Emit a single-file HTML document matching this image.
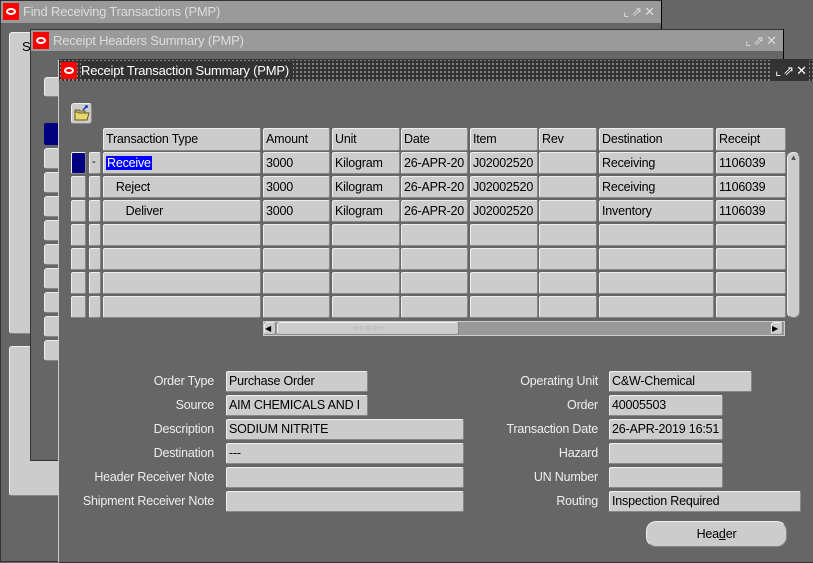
<!DOCTYPE html>
<html><head><style>
*{box-sizing:border-box;margin:0;padding:0}
body{width:813px;height:562px;background:#666;position:relative;overflow:hidden;font-family:"Liberation Sans",sans-serif;font-size:12.5px;letter-spacing:-0.2px}
.a{position:absolute}
.win{position:absolute;background:#666;border:1px solid #333}
.tb{position:absolute;left:0;right:0;top:0;height:21px;color:#e0e0e0;font-size:13px;line-height:21px;padding-left:22px;white-space:nowrap}
.logo{position:absolute;left:2px;top:2px;width:16px;height:17px;background:#f00}
.logo:after{content:"";position:absolute;left:3px;top:5px;width:10px;height:7px;border:2px solid #fff;border-radius:50%/50%;box-sizing:border-box}
.ctl{position:absolute;right:4px;top:0;font-size:13px;letter-spacing:2px;color:#ddd}
.f{position:absolute;background:#ccc;border:1px solid #eee;border-right-color:#888;border-bottom-color:#888;border-radius:2px;height:21px;line-height:19px;padding-left:2px;white-space:nowrap;overflow:hidden;color:#000}
.lb{position:absolute;color:#eee;text-align:right;white-space:nowrap;line-height:21px}
.p{position:absolute;background:#ccc;border:1px solid #eee;border-right-color:#888;border-bottom-color:#888;border-radius:3px}
</style></head><body>
<div class="win" style="left:0;top:0;width:662px;height:562px;border-right:1px solid #000">
 <div class="tb" style="background:#9a9a9a;height:22px;color:#ddd"><div class="logo"></div>Find Receiving Transactions (PMP)<span class="ctl">⌞⇗✕</span></div>
 <div class="p" style="left:8px;top:31px;width:640px;height:302px"></div>
 <div class="a" style="left:21px;top:38px;color:#000;font-size:13px">S</div>
 <div class="p" style="left:8px;top:345px;width:640px;height:150px"></div>
</div>
<div class="win" style="left:30px;top:29px;width:754px;height:432px;border-right:1px solid #000">
 <div class="tb" style="background:#9a9a9a;color:#ddd"><div class="logo"></div>Receipt Headers Summary (PMP)<span class="ctl">⌞⇗✕</span></div>
 <div class="p" style="left:13px;top:47px;width:20px;height:20px"></div>
 <div class="a" style="left:13px;top:93px;width:20px;height:22px;background:#000080;border-radius:2px"></div>
 <div class="p" style="left:13px;top:118px;width:20px;height:21px"></div>
 <div class="p" style="left:13px;top:142px;width:20px;height:21px"></div>
 <div class="p" style="left:13px;top:166px;width:20px;height:21px"></div>
 <div class="p" style="left:13px;top:190px;width:20px;height:21px"></div>
 <div class="p" style="left:13px;top:214px;width:20px;height:21px"></div>
 <div class="p" style="left:13px;top:238px;width:20px;height:21px"></div>
 <div class="p" style="left:13px;top:262px;width:20px;height:21px"></div>
 <div class="p" style="left:13px;top:286px;width:20px;height:21px"></div>
 <div class="p" style="left:13px;top:310px;width:20px;height:21px"></div>
</div>
<div class="win" style="left:58px;top:59px;width:756px;height:504px;border-left:1px solid #ccc">
 <div class="tb" style="background:#333;color:#fff;background-image:radial-gradient(#888 1px,transparent 1.2px);background-size:4px 4px;background-position:0 6px">
  <div class="logo"></div><span style="background:#333;padding-right:4px">Receipt Transaction Summary (PMP)</span><span class="ctl" style="background:#333;color:#fff;padding-left:4px">⌞⇗✕</span></div>
</div>
<div class="p" style="left:71px;top:103px;width:21px;height:21px">
<svg width="19" height="19" viewBox="0 0 19 19" style="position:absolute;left:0;top:0"><path d="M3 8 L3 16 L15 16 L17 9 L7 9 L6 8 Z" fill="#e8d870" stroke="#6a5a10"/><path d="M3 8 L3 6 L7 6 L8 7 L13 7 L13 9" fill="none" stroke="#6a5a10"/><path d="M11 6 L15 2 M13 2 L15 2 L15 4" stroke="#1040c0" stroke-width="1.5" fill="none"/></svg></div>
<div id="g"></div>
<script>
var cols=[[103,158,"Transaction Type"],[263,67,"Amount"],[332,68,"Unit"],[401,67,"Date"],[470,68,"Item"],[539,58,"Rev"],[599,115,"Destination"],[716,70,"Receipt"]];
var rows=[["Receive","3000","Kilogram","26-APR-20","J02002520","","Receiving","1106039"],["   Reject","3000","Kilogram","26-APR-20","J02002520","","Receiving","1106039"],["      Deliver","3000","Kilogram","26-APR-20","J02002520","","Inventory","1106039"],[],[],[],[]];
var h="";
cols.forEach(function(c){h+='<div class="f" style="left:'+c[0]+'px;top:128px;width:'+c[1]+'px;height:23px;line-height:21px">'+c[2]+'</div>';});
rows.forEach(function(r,i){var y=152+i*24;
 h+='<div class="f" style="left:71px;top:'+y+'px;width:15px;height:22px;'+(i==0?'background:#000080;':'')+'"></div>';
 h+='<div class="f" style="left:89px;top:'+y+'px;width:12px;height:22px;font-size:11px">'+(i==0?'-':'')+'</div>';
 cols.forEach(function(c,j){var t=r[j]||"";if(j==0&&i==0)t='<span style="background:#0000ff;color:#fff;padding:0 1px">Receive</span>';else if(j==0)t='<span style="white-space:pre">'+t+'</span>';
 h+='<div class="f" style="left:'+c[0]+'px;top:'+y+'px;width:'+c[1]+'px;height:22px;line-height:21px">'+t+'</div>';});});
document.getElementById("g").innerHTML=h;
</script>
<div class="p" style="left:787px;top:152px;width:13px;height:166px;border-radius:6px;font-size:8px;text-align:center;color:#555">▲</div>
<div class="a" style="left:263px;top:321px;width:522px;height:15px;background:#999;border:1px solid #ccc"></div>
<div class="p" style="left:277px;top:322px;width:182px;height:13px;font-size:8px;color:#888;text-align:center;line-height:11px">⁘⁘⁘⁘⁘</div>
<div class="p" style="left:264px;top:322px;width:12px;height:13px;font-size:8px;line-height:11px">◀</div>
<div class="p" style="left:771px;top:322px;width:12px;height:13px;font-size:8px;line-height:11px">▶</div>
<div class="lb" style="right:599px;top:371px">Order Type</div><div class="f" style="left:226px;top:371px;width:142px">Purchase Order</div>
<div class="lb" style="right:599px;top:395px">Source</div><div class="f" style="left:226px;top:395px;width:142px">AIM CHEMICALS AND I</div>
<div class="lb" style="right:599px;top:419px">Description</div><div class="f" style="left:226px;top:419px;width:238px">SODIUM NITRITE</div>
<div class="lb" style="right:599px;top:443px">Destination</div><div class="f" style="left:226px;top:443px;width:238px">---</div>
<div class="lb" style="right:599px;top:467px">Header Receiver Note</div><div class="f" style="left:226px;top:467px;width:238px"></div>
<div class="lb" style="right:599px;top:491px">Shipment Receiver Note</div><div class="f" style="left:226px;top:491px;width:238px"></div>
<div class="lb" style="right:215px;top:371px">Operating Unit</div><div class="f" style="left:609px;top:371px;width:143px">C&amp;W-Chemical</div>
<div class="lb" style="right:215px;top:395px">Order</div><div class="f" style="left:609px;top:395px;width:114px">40005503</div>
<div class="lb" style="right:215px;top:419px">Transaction Date</div><div class="f" style="left:609px;top:419px;width:114px">26-APR-2019 16:51</div>
<div class="lb" style="right:215px;top:443px">Hazard</div><div class="f" style="left:609px;top:443px;width:114px"></div>
<div class="lb" style="right:215px;top:467px">UN Number</div><div class="f" style="left:609px;top:467px;width:114px"></div>
<div class="lb" style="right:215px;top:491px">Routing</div><div class="f" style="left:609px;top:491px;width:192px">Inspection Required</div>
<div class="p" style="left:646px;top:521px;width:141px;height:26px;border-radius:10px;text-align:center;line-height:24px">Hea<u>d</u>er</div>
</body></html>
